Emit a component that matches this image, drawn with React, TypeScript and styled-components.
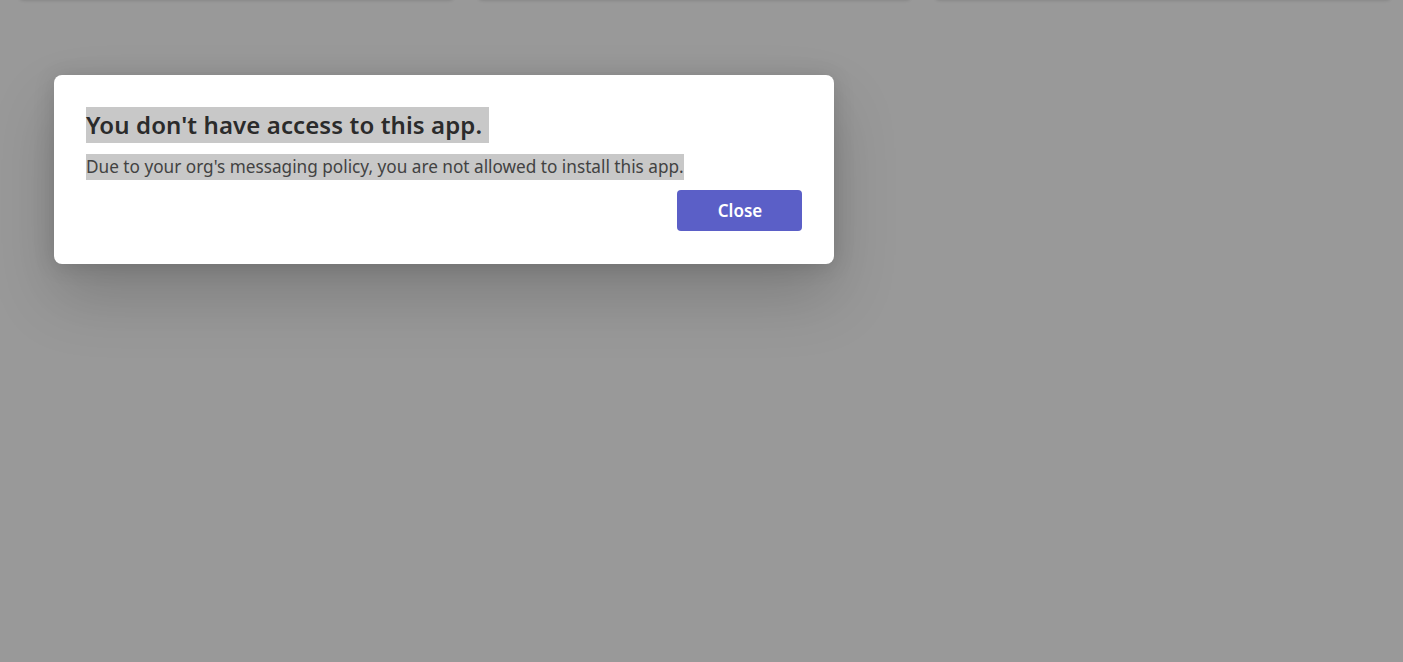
import * as React from "react"
import styled, { createGlobalStyle } from "styled-components"

const GlobalStyle = createGlobalStyle`
  html, body {
    margin: 0;
    padding: 0;
    background: #999999;
    font-family: "Segoe UI", "Noto Sans", "Open Sans", sans-serif;
  }
`

const Page = styled.div`
  position: relative;
  width: 1403px;
  height: 662px;
  overflow: hidden;
  background: #999999;
`

const CardRow = styled.div`
  display: flex;
  gap: 22px;
  padding: 0 10px 0 18px;
  margin-top: -40px;
`

const Card = styled.div<{ $w: number }>`
  width: ${(p) => p.$w}px;
  height: 40px;
  background: #9b9b9b;
  border-radius: 0 0 6px 6px;
  box-shadow: 0 1px 3px rgba(0, 0, 0, 0.12);
`

const Overlay = styled.div`
  position: absolute;
  inset: 0;
  padding: 75px 0 0 54px;
`

const Dialog = styled.div`
  width: 780px;
  box-sizing: border-box;
  padding: 32px 32px 33px;
  background: #ffffff;
  border-radius: 8px;
  box-shadow: 0 32px 64px rgba(0, 0, 0, 0.18), 0 2px 21px rgba(0, 0, 0, 0.14);
  display: flex;
  flex-direction: column;
`

const Title = styled.h1`
  margin: 0;
  font-size: 24px;
  font-weight: 600;
  line-height: 36px;
  letter-spacing: 0.1px;
  color: #2b2b2b;
`

const Body = styled.p`
  margin: 11px 0 0;
  font-size: 17.2px;
  font-weight: 400;
  line-height: 26px;
  color: #424242;
`

const Selected = styled.span`
  display: inline-block;
  background: #c8c8c8;
`

const Actions = styled.div`
  display: flex;
  justify-content: flex-end;
  margin-top: 10px;
`

const Button = styled.button`
  width: 125px;
  height: 41px;
  border: none;
  border-radius: 4px;
  background: #5b5fc7;
  color: #ffffff;
  font-family: inherit;
  font-size: 17px;
  font-weight: 600;
  cursor: pointer;
  padding: 0 0 0 1px;
`

export default function App() {
  return (
    <Page>
      <GlobalStyle />
      <CardRow>
        <Card $w={437} />
        <Card $w={435} />
        <Card $w={458} />
      </CardRow>
      <Overlay>
        <Dialog role="dialog">
          <Title>
            <Selected>You don't have access to this app.&nbsp;</Selected>
          </Title>
          <Body>
            <Selected>
              Due to your org's messaging policy, you are not allowed to install this app.
            </Selected>
          </Body>
          <Actions>
            <Button>Close</Button>
          </Actions>
        </Dialog>
      </Overlay>
    </Page>
  )
}
